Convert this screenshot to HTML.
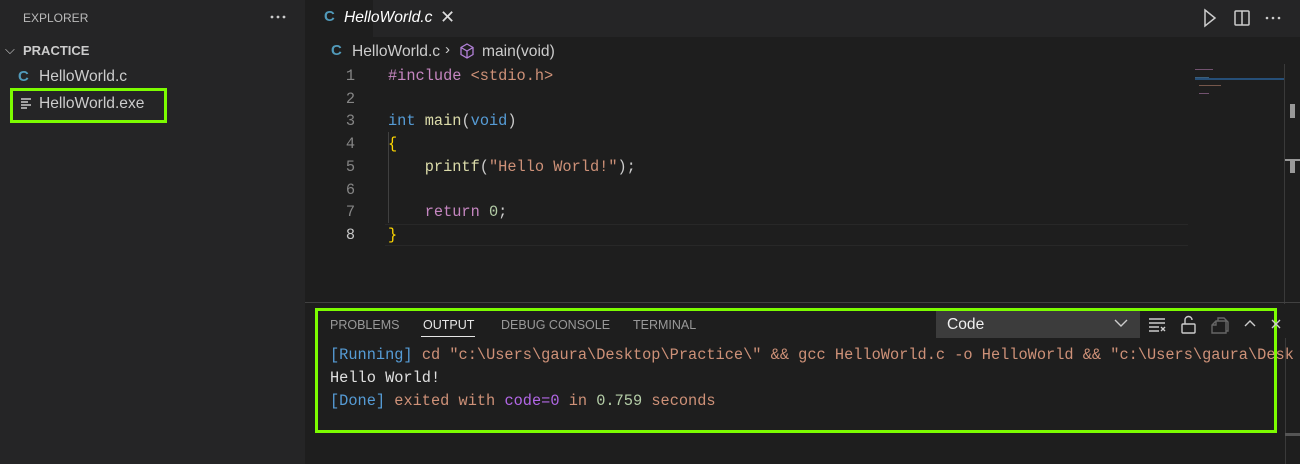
<!DOCTYPE html>
<html><head><style>
*{margin:0;padding:0;box-sizing:border-box}
body{width:1300px;height:464px;background:#1e1e1e;overflow:hidden;position:relative;font-family:"Liberation Sans",sans-serif;color:#ccc}
.abs{position:absolute;white-space:pre}
.mono{font-family:"Liberation Mono",monospace;font-size:15.3px}
#side{left:0;top:0;width:305px;height:464px;background:#252526}
#tabs{left:305px;top:0;width:995px;height:37px;background:#252526}
#tab{left:305px;top:0;width:68px;height:37px;background:#1e1e1e}
.kw{color:#c586c0}.str{color:#ce9178}.ty{color:#569cd6}.fn{color:#dcdcaa}.num{color:#b5cea8}.br{color:#ffd700}
.ln{color:#858585;width:50px;text-align:right;left:305px}
</style></head><body>
<div id="side" class="abs"></div>
<div class="abs" style="left:23px;top:11px;font-size:12px;color:#bbb">EXPLORER</div>
<svg class="abs" style="left:269px;top:14px" width="20" height="6"><circle cx="3" cy="3" r="1.4" fill="#ccc"/><circle cx="9" cy="3" r="1.4" fill="#ccc"/><circle cx="15" cy="3" r="1.4" fill="#ccc"/></svg>
<div class="abs" style="left:5px;top:42px;font-size:13px;color:#ccc">⌵</div>
<div class="abs" style="left:23px;top:43px;font-size:13px;font-weight:bold;color:#ccc">PRACTICE</div>
<div class="abs" style="left:18px;top:68px;font-size:15px;font-weight:bold;color:#519aba">C</div>
<div class="abs" style="left:39px;top:68px;font-size:15.6px;color:#ccc">HelloWorld.c</div>
<div class="abs" style="left:10px;top:88px;width:157px;height:35px;border:3px solid #7cfc00"></div>
<svg class="abs" style="left:20px;top:97px" width="12" height="12"><g stroke="#ccc" stroke-width="1.5"><path d="M1 2h10M1 5h7M1 8h10M1 11h6"/></g></svg>
<div class="abs" style="left:39px;top:95px;font-size:15.6px;color:#ccc">HelloWorld.exe</div>

<div id="tabs" class="abs"></div>
<div id="tab" class="abs"></div>
<div class="abs" style="left:324px;top:8px;font-size:15px;font-weight:bold;color:#519aba">C</div>
<div class="abs" style="left:344px;top:9px;font-size:15.6px;font-style:italic;color:#fff">HelloWorld.c</div>
<div class="abs" style="left:440px;top:7px;font-size:18px;color:#ddd">✕</div>
<svg class="abs" style="left:1200px;top:8px" width="90" height="20"><path d="M5 2l10 8-10 8z" fill="none" stroke="#ccc" stroke-width="1.5"/><rect x="35" y="3" width="14" height="14" rx="1" fill="none" stroke="#ccc" stroke-width="1.5"/><path d="M42 3v14" stroke="#ccc" stroke-width="1.5"/><circle cx="67" cy="10" r="1.3" fill="#ccc"/><circle cx="73" cy="10" r="1.3" fill="#ccc"/><circle cx="79" cy="10" r="1.3" fill="#ccc"/></svg>

<div class="abs" style="left:331px;top:42px;font-size:15px;font-weight:bold;color:#519aba">C</div>
<div class="abs" style="left:352px;top:43px;font-size:15.6px;color:#ccc">HelloWorld.c</div>
<div class="abs" style="left:445px;top:41px;font-size:15px;color:#ccc">›</div>
<svg class="abs" style="left:459px;top:43px" width="16" height="16"><path d="M8 1l6 3.5v7L8 15 2 11.5v-7z M2 4.5L8 8l6-3.5M8 8v7" fill="none" stroke="#b180d7" stroke-width="1.3"/></svg>
<div class="abs" style="left:482px;top:43px;font-size:15.6px;color:#ccc">main(void)</div>

<div class="abs" style="left:385px;top:224px;width:803px;height:22px;border-top:1px solid #282828;border-bottom:1px solid #282828"></div>
<div class="abs" style="left:388px;top:132px;width:1px;height:91px;background:#404040"></div>
<div class="abs mono ln" style="top:67px">1</div>
<div class="abs mono ln" style="top:90px">2</div>
<div class="abs mono ln" style="top:112px">3</div>
<div class="abs mono ln" style="top:135px">4</div>
<div class="abs mono ln" style="top:158px">5</div>
<div class="abs mono ln" style="top:181px">6</div>
<div class="abs mono ln" style="top:203px">7</div>
<div class="abs mono ln" style="top:226px;color:#c6c6c6">8</div>
<div class="abs mono" style="left:388px;top:67px"><span class="kw">#include</span> <span class="str">&lt;stdio.h&gt;</span></div>
<div class="abs mono" style="left:388px;top:112px"><span class="ty">int</span> <span class="fn">main</span>(<span class="ty">void</span>)</div>
<div class="abs mono" style="left:388px;top:135px"><span class="br">{</span></div>
<div class="abs mono" style="left:388px;top:158px">    <span class="fn">printf</span>(<span class="str">"Hello World!"</span>);</div>
<div class="abs mono" style="left:388px;top:203px">    <span class="kw">return</span> <span class="num">0</span>;</div>
<div class="abs mono" style="left:388px;top:226px"><span class="br">}</span></div>

<div class="abs" style="left:1195px;top:64px;width:90px;height:14px;opacity:.5;font-size:3px">
<div style="background:#c586c0;width:18px;height:1px;margin-top:1px"></div>
<div style="background:#569cd6;width:14px;height:1px;margin-top:3px"></div>
<div style="background:#ce9178;width:22px;height:1px;margin-top:3px;margin-left:4px"></div>
<div style="background:#c586c0;width:10px;height:1px;margin-top:3px;margin-left:4px"></div>
</div>
<div class="abs" style="left:1195px;top:78px;width:89px;height:2px;background:#264f78"></div>
<div class="abs" style="left:1284px;top:64px;width:1px;height:240px;background:#3a3a3a"></div>
<div class="abs" style="left:1290px;top:104px;width:5px;height:14px;background:#999"></div>
<div class="abs" style="left:1285px;top:159px;width:15px;height:2px;background:#999"></div>
<div class="abs" style="left:1290px;top:161px;width:5px;height:12px;background:#999"></div>

<div class="abs" style="left:305px;top:302px;width:995px;height:1px;background:#414141"></div>
<div class="abs" style="left:315px;top:308px;width:962px;height:125px;border:3px solid #7cfc00"></div>
<div class="abs" style="left:330px;top:318px;font-size:12.5px;color:#999">PROBLEMS</div>
<div class="abs" style="left:423px;top:318px;font-size:12.5px;color:#e7e7e7">OUTPUT</div>
<div class="abs" style="left:421px;top:336px;width:54px;height:1px;background:#e7e7e7"></div>
<div class="abs" style="left:501px;top:318px;font-size:12.5px;color:#999">DEBUG CONSOLE</div>
<div class="abs" style="left:633px;top:318px;font-size:12.5px;color:#999">TERMINAL</div>
<div class="abs" style="left:936px;top:311px;width:204px;height:27px;background:#3c3c3c"></div>
<div class="abs" style="left:947px;top:316px;font-size:15.6px;color:#f0f0f0">Code</div>
<svg class="abs" style="left:1114px;top:318px" width="14" height="10"><path d="M1 2l6 6 6-6" fill="none" stroke="#ccc" stroke-width="1.4"/></svg>
<svg class="abs" style="left:1148px;top:315px" width="140" height="20"><g fill="none" stroke="#ccc" stroke-width="1.4"><path d="M1 4h16M1 8h16M1 12h10M1 16h10M13 12l4 4M17 12l-4 4"/><rect x="34" y="9" width="13" height="9" rx="1"/><path d="M37 9V5a3.5 3.5 0 0 1 7 0"/></g><g fill="none" stroke="#666" stroke-width="1.4"><path d="M68 6h10v12H64V10zM64 10h4V6M70 6V3h6l4 4v9h-2"/></g><path d="M97 11l5-5 5 5" fill="none" stroke="#ccc" stroke-width="1.4"/><path d="M124 5l8 8M132 5l-8 8" stroke="#ccc" stroke-width="1.4"/></svg>
<div class="abs mono" style="left:330px;top:346px"><span class="ty">[Running]</span> <span class="str">cd "c:\Users\gaura\Desktop\Practice\" &amp;&amp; gcc HelloWorld.c -o HelloWorld &amp;&amp; "c:\Users\gaura\Desk</span></div>
<div class="abs mono" style="left:330px;top:369px;color:#e0e0e0">Hello World!</div>
<div class="abs mono" style="left:330px;top:392px"><span class="ty">[Done]</span> <span class="str">exited with</span> <span style="color:#b267e6">code=0</span> <span class="str">in</span> <span class="num">0.759</span> <span class="str">seconds</span></div>
<div class="abs" style="left:1285px;top:338px;width:1px;height:126px;background:#3a3a3a"></div>
<div class="abs" style="left:1285px;top:433px;width:15px;height:3px;background:#555"></div>
</body></html>
